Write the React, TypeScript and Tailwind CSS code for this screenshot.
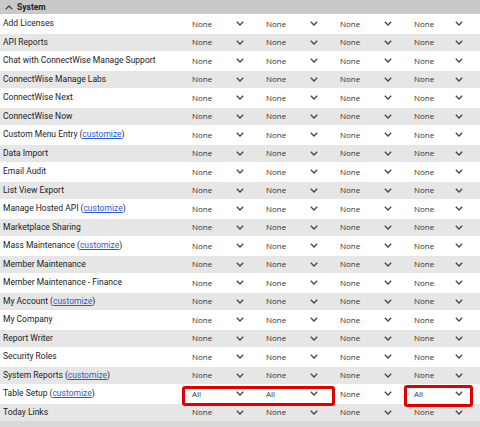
import React from 'react'

interface Row {
  label: string
  customize?: boolean
  values?: string[]
}

const rows: Row[] = [
  { label: 'Add Licenses' },
  { label: 'API Reports' },
  { label: 'Chat with ConnectWise Manage Support' },
  { label: 'ConnectWise Manage Labs' },
  { label: 'ConnectWise Next' },
  { label: 'ConnectWise Now' },
  { label: 'Custom Menu Entry', customize: true },
  { label: 'Data Import' },
  { label: 'Email Audit' },
  { label: 'List View Export' },
  { label: 'Manage Hosted API', customize: true },
  { label: 'Marketplace Sharing' },
  { label: 'Mass Maintenance', customize: true },
  { label: 'Member Maintenance' },
  { label: 'Member Maintenance - Finance' },
  { label: 'My Account', customize: true },
  { label: 'My Company' },
  { label: 'Report Writer' },
  { label: 'Security Roles' },
  { label: 'System Reports', customize: true },
  { label: 'Table Setup', customize: true, values: ['All', 'All', 'None', 'All'] },
  { label: 'Today Links' },
]

function Chevron() {
  return (
    <svg width="8" height="5" viewBox="0 0 8 5" className="shrink-0">
      <polyline points="0.8,0.8 4,4 7.2,0.8" fill="none" stroke="#444" strokeWidth="1.3" />
    </svg>
  )
}

function Select({ value }: { value: string }) {
  return (
    <div className="flex items-center justify-between pl-[5px] pr-[17px] h-full">
      <span className="text-[8px] text-[#333]" style={{ fontFamily: '"Open Sans", sans-serif' }}>{value}</span>
      <Chevron />
    </div>
  )
}

export default function App() {
  return (
    <div className="w-[480px] h-[427px] overflow-hidden bg-[#d9d9d9]" style={{ fontFamily: 'Roboto, sans-serif' }}>
      <div className="h-[14px] bg-[#c9c9c9] flex items-center gap-[4px] pl-[5px]">
        <svg width="8" height="5" viewBox="0 0 8 5">
          <polyline points="0.8,4.2 4,1 7.2,4.2" fill="none" stroke="#333" strokeWidth="1.2" />
        </svg>
        <span className="text-[8.5px] font-bold text-[#222]">System</span>
      </div>
      {rows.map((row, i) => {
        const values = row.values ?? ['None', 'None', 'None', 'None']
        const highlight = !!row.values
        return (
          <div
            key={row.label}
            className={`relative h-[18.5px] grid grid-cols-[187px_74px_74px_74px_71px] border-t border-white ${i % 2 === 0 ? 'bg-white' : 'bg-[#e6e6e6]'}`}
          >
            <div className="flex items-center pl-[3px] text-[8.5px] text-[#222] whitespace-nowrap">
              {row.label}
              {row.customize && (
                <span className="ml-[2px]">
                  (<span className="text-[#2a5bd7] underline">customize</span>)
                </span>
              )}
            </div>
            {values.map((v, j) => (
              <Select key={j} value={v} />
            ))}
            {highlight && (
              <>
                <div className="absolute z-10 left-[182px] top-[1px] w-[153px] h-[20px] border-[3px] border-[#e00000] rounded-[3px]" />
                <div className="absolute z-10 left-[404px] top-[0px] w-[69px] h-[22px] border-[3px] border-[#e00000] rounded-[3px]" />
              </>
            )}
          </div>
        )
      })}
    </div>
  )
}
